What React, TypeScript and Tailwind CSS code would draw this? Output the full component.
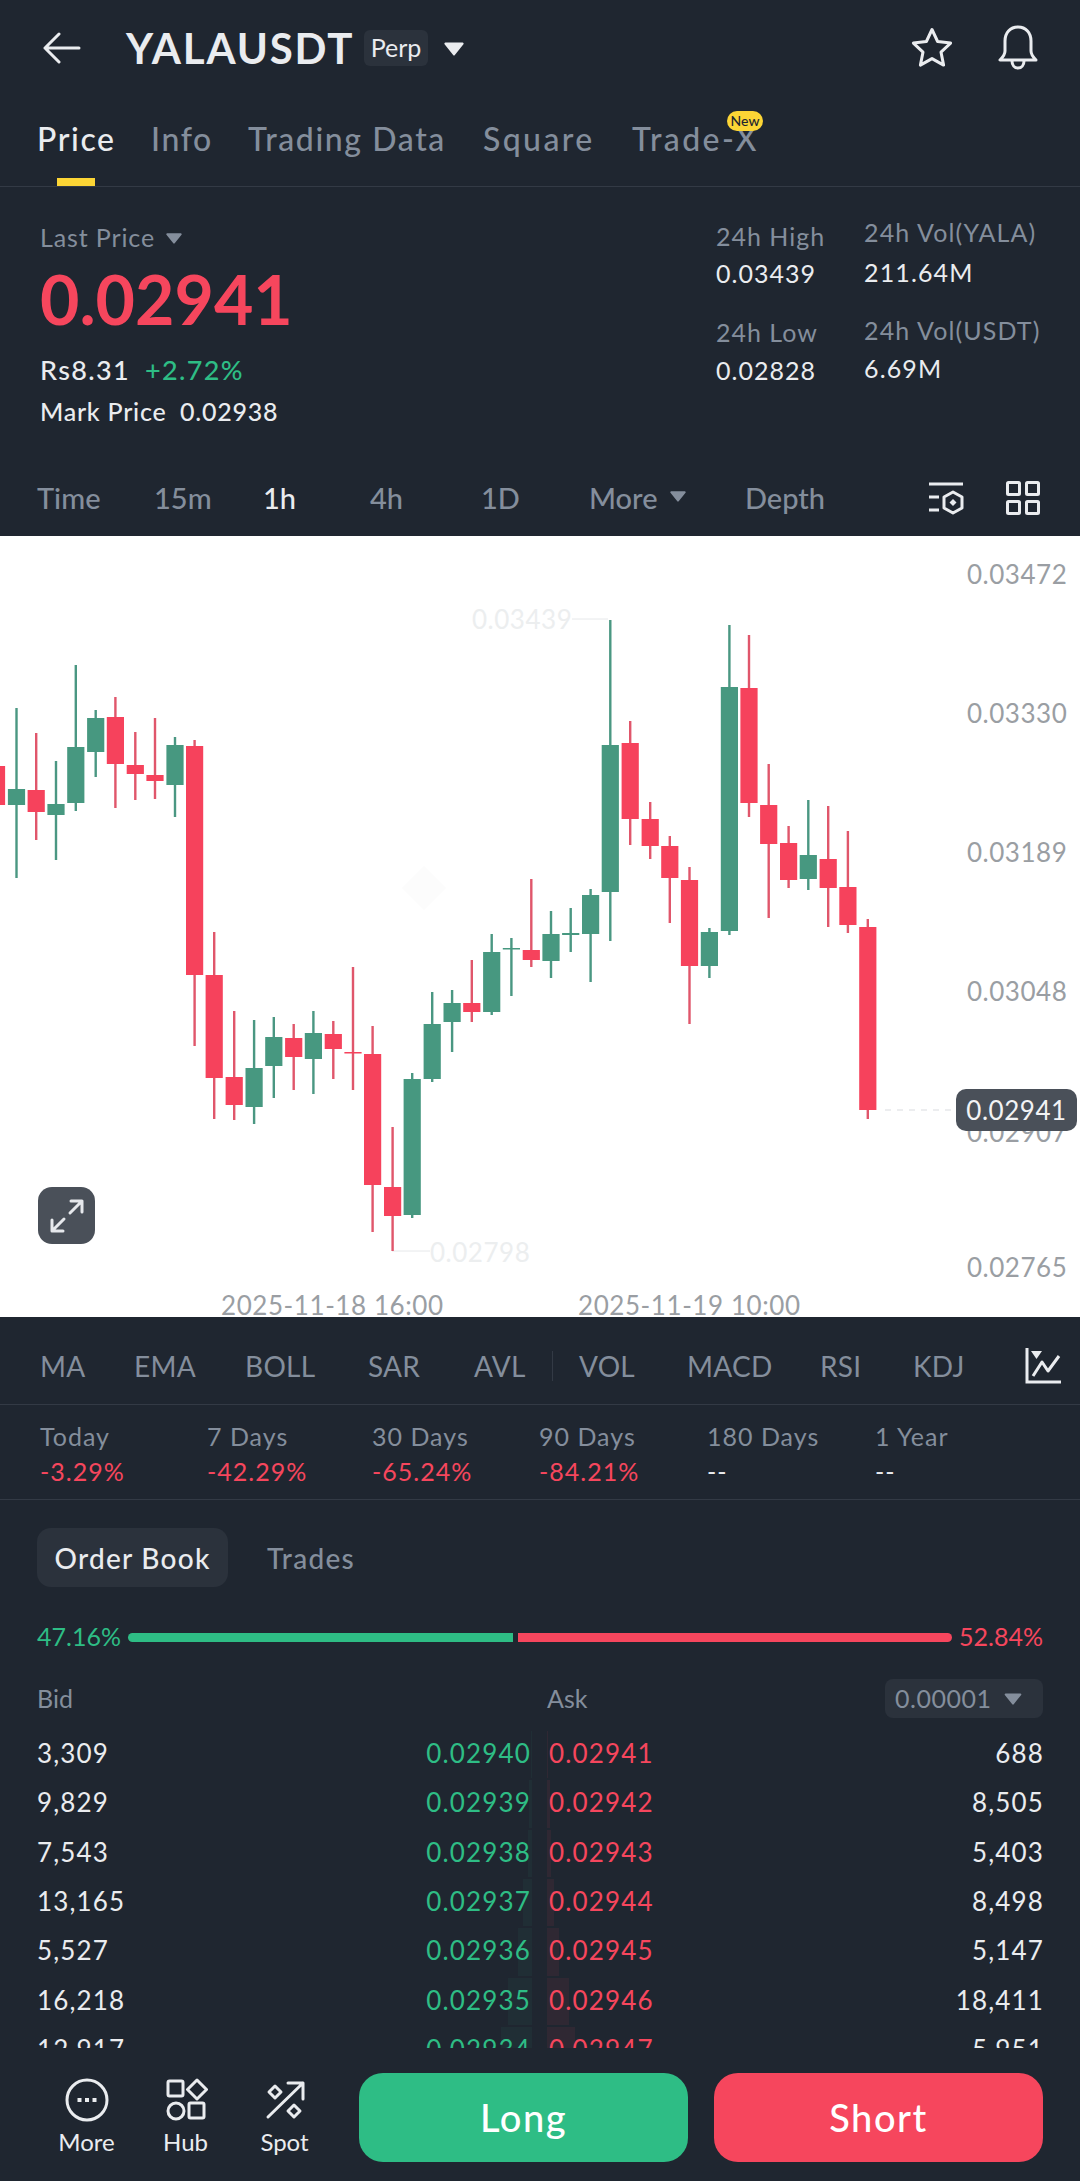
import React from "react";

type C = [number, "g" | "r", number, number, number, number];
// x, colour, wickTop, wickBottom, bodyTop, bodyBottom (page coordinates, the chart starts at y=536)
const candles: C[] = [
  [-3.5, "r", 766, 830, 766, 805],
  [16.5, "g", 708, 878, 789, 805],
  [36.2, "r", 733, 840, 790, 812],
  [56, "g", 761, 860, 804, 815],
  [75.8, "g", 665, 811, 747, 803],
  [95.7, "g", 710, 777, 718, 752],
  [115.4, "r", 697, 808, 717, 764],
  [135.3, "r", 732, 800, 765, 774],
  [155, "r", 718, 799, 775, 781],
  [175, "g", 737, 817, 745, 785],
  [194.6, "r", 740, 1046, 746, 975],
  [214.2, "r", 932, 1119, 975, 1078],
  [234.2, "r", 1011, 1120, 1077, 1105],
  [254.1, "g", 1020, 1124, 1068, 1107],
  [273.8, "g", 1017, 1098, 1037, 1066],
  [293.7, "r", 1024, 1090, 1038, 1057],
  [313.4, "g", 1011, 1094, 1033, 1059],
  [333.3, "r", 1021, 1079, 1034, 1049],
  [353, "r", 967, 1090, 1052, 1053.5],
  [372.6, "r", 1026, 1232, 1054, 1185],
  [392.6, "r", 1127, 1251, 1187, 1216],
  [412.2, "g", 1073, 1218, 1079, 1215],
  [432.2, "g", 992, 1082, 1024, 1079],
  [452.1, "g", 990, 1052, 1003, 1022],
  [471.8, "r", 960, 1022, 1003, 1012],
  [491.7, "g", 934, 1015, 952, 1012],
  [511.4, "g", 938, 996, 948, 949.5],
  [531.3, "r", 879, 967, 950, 960],
  [551, "g", 911, 978, 934, 961],
  [570.7, "g", 908, 952, 933, 935],
  [590.6, "g", 889, 982, 895, 934],
  [610.3, "g", 620, 941, 745, 892],
  [630.2, "r", 721, 845, 743, 819],
  [650.2, "r", 802, 859, 819, 846],
  [669.8, "r", 836, 923, 846, 878],
  [689.5, "r", 867, 1024, 880, 966],
  [709.4, "g", 928, 978, 932, 966],
  [729.4, "g", 625, 935, 687, 931],
  [749, "r", 635, 817, 688, 803],
  [768.7, "r", 764, 918, 805, 844],
  [788.6, "r", 826, 888, 843, 880],
  [808.3, "g", 800, 890, 855, 879],
  [828.2, "r", 806, 927, 859, 888],
  [847.9, "r", 831, 933, 887, 925],
  [867.8, "r", 919, 1119, 927, 1110],
];

const rows = [
  ["3,309", "0.02940", "0.02941", "688", 1, 1],
  ["9,829", "0.02939", "0.02942", "8,505", 3, 3],
  ["7,543", "0.02938", "0.02943", "5,403", 4, 4],
  ["13,165", "0.02937", "0.02944", "8,498", 9, 7],
  ["5,527", "0.02936", "0.02945", "5,147", 14, 12],
  ["16,218", "0.02935", "0.02946", "18,411", 24, 22],
  ["12,917", "0.02934", "0.02947", "5,951", 31, 28],
] as const;

const Tri = ({ cls }: { cls: string }) => (
  <svg viewBox="0 0 20 14" className={cls} fill="currentColor">
    <path d="M2 1.5h16a1 1 0 0 1 .8 1.6l-8 10a1 1 0 0 1-1.6 0l-8-10A1 1 0 0 1 2 1.5z" />
  </svg>
);

function Header() {
  return (
    <div className="h-[96px] flex items-center pl-[43px] shrink-0">
      <svg viewBox="0 0 38 32" className="w-[38px] h-[32px] text-[#eaecef]" fill="none" stroke="currentColor" strokeWidth="3" strokeLinecap="round" strokeLinejoin="round">
        <path d="M36 16H2M16 2 2 16l14 14" />
      </svg>
      <div className="ml-[45px] text-[42px] leading-[50px] font-bold text-[#eaecef] tracking-[1.8px] w-[238px] -mt-[1px] whitespace-nowrap">YALAUSDT</div>
      <div className="h-[36px] w-[64px] rounded-[6px] bg-[#2b323c] flex items-center justify-center text-[25px] text-[#eaecef]">Perp</div>
      <Tri cls="ml-[15px] w-[22px] h-[15px] text-[#eaecef]" />
      <svg viewBox="0 0 44 44" className="ml-[445px] w-[44px] h-[44px] text-[#eaecef]" fill="none" stroke="currentColor" strokeWidth="3" strokeLinejoin="round">
        <path d="M22 3.5l5.6 12 13 1.6-9.6 9 2.6 13L22 32.6 10.4 39.100l2.600-13-9.600-9 13-1.600z" />
      </svg>
      <svg viewBox="0 0 44 48" className="ml-[42px] w-[44px] h-[48px] text-[#eaecef]" fill="none" stroke="currentColor" strokeWidth="3" strokeLinejoin="round" strokeLinecap="round">
        <path d="M22 3c-8 0-13 6-13 14v10c0 3-2 6-5 9h36c-3-3-5-6-5-9V17c0-8-5-14-13-14z" />
        <path d="M16 37c0 4 2.500 7 6 7s6-3 6-7" />
      </svg>
    </div>
  );
}

function Tabs() {
  const t: [string, string, string][] = [
    ["Info", "w-[97px]", ""],
    ["Trading Data", "w-[235px]", ""],
    ["Square", "w-[149px]", "tracking-[0.075em]"],
    ["Trade-X", "w-[130px]", "tracking-[0.075em]"],
  ];
  return (
    <div className="h-[91px] flex pl-[38px] border-b border-[#333a45] shrink-0 text-[32px] tracking-[0.05em] font-medium text-[#848e9c] whitespace-nowrap">
      <div className="w-[113px] flex flex-col">
        <div className="h-[82px] pt-[24px] leading-[38px] text-[#eaecef] -ml-[1px]">Price</div>
        <div className="ml-[19px] w-[38px] h-[8px] bg-[#fcd535]" />
      </div>
      {t.map(([n, w, s]) => (
        <div key={n} className={`${w} ${s} pt-[24px] leading-[38px] relative`}>
          {n}
          {n === "Trade-X" && (
            <span className="absolute left-[95px] top-[15px] w-[36px] h-[20px] rounded-[10px] bg-[#fcd535] text-[#1f2630] text-[14px] leading-[20px] text-center tracking-normal">New</span>
          )}
        </div>
      ))}
    </div>
  );
}

function Stats() {
  return (
    <div className="h-[283px] flex shrink-0 relative">
      <div className="w-[716px] pl-[40px] pt-[37px]">
        <div className="flex items-center h-[28px] text-[25px] tracking-[0.035em] text-[#848e9c]">
          Last Price
          <Tri cls="ml-[10px] w-[18px] h-[12px]" />
        </div>
        <div className="mt-[15px] h-[64px] leading-[64px] text-[68px] font-bold text-[#f6465d]">0.02941</div>
        <div className="mt-[24px] h-[30px] leading-[30px] text-[27px] tracking-[0.05em] font-medium text-[#eaecef] flex">
          <span className="w-[105px]">Rs8.31</span>
          <span className="text-[#2ebd85]">+2.72%</span>
        </div>
        <div className="mt-[11px] h-[30px] leading-[30px] text-[25px] tracking-[0.03em] font-medium text-[#eaecef] flex">
          <span className="w-[140px]">Mark Price</span>
          <span>0.02938</span>
        </div>
      </div>
      <div className="w-[148px] pt-[35px] text-[25px] leading-[28px] tracking-[0.04em]">
        <div className="text-[#848e9c]">24h High</div>
        <div className="mt-[9px] text-[#eaecef]">0.03439</div>
        <div className="mt-[31px] text-[#848e9c]">24h Low</div>
        <div className="mt-[10px] text-[#eaecef]">0.02828</div>
      </div>
      <div className="pt-[31px] text-[25px] leading-[28px] whitespace-nowrap tracking-[0.045em]">
        <div className="text-[#848e9c]">24h Vol(YALA)</div>
        <div className="mt-[12px] text-[#eaecef]">211.64M</div>
        <div className="mt-[30px] text-[#848e9c]">24h Vol(USDT)</div>
        <div className="mt-[10px] text-[#eaecef]">6.69M</div>
      </div>
    </div>
  );
}

function TimeRow() {
  const c: [string, string, boolean][] = [
    ["Time", "w-[117px]", false],
    ["15m", "w-[109px]", false],
    ["1h", "w-[107px]", true],
    ["4h", "w-[111px]", false],
    ["1D", "w-[108px]", false],
  ];
  return (
    <div className="h-[66px] flex items-center pl-[37px] pb-[10px] shrink-0 text-[29px] text-[#848e9c] font-medium">
      {c.map(([n, w, a]) => (
        <div key={n} className={`${w} ${a ? "text-[#eaecef]" : ""}`}>{n}</div>
      ))}
      <div className="w-[156px] flex items-center">
        More
        <Tri cls="ml-[11px] w-[18px] h-[12px] -mt-[4px]" />
      </div>
      <div className="w-[183px]">Depth</div>
      <svg viewBox="0 0 36 34" className="w-[36px] h-[34px] text-[#eaecef]" fill="none" stroke="currentColor" strokeWidth="3">
        <path d="M1 3h34M1 16h10M1 29h10" />
        <path d="M25 11l9 5v11l-9 5-9-5V16z" strokeLinejoin="round" />
        <path d="M25 18l3.500 3.500L25 25l-3.500-3.500z" fill="currentColor" stroke="none" />
      </svg>
      <svg viewBox="0 0 34 34" className="ml-[42px] w-[34px] h-[34px] text-[#eaecef]" fill="none" stroke="currentColor" strokeWidth="3">
        <rect x="1.500" y="1.500" width="12" height="12" rx="1" />
        <rect x="20.500" y="1.500" width="12" height="12" rx="1" />
        <rect x="1.500" y="20.500" width="12" height="12" rx="1" />
        <rect x="20.500" y="20.500" width="12" height="12" rx="1" />
      </svg>
    </div>
  );
}

function Chart() {
  const axis: [string, string][] = [
    ["0.03472", "top-[25px]"],
    ["0.03330", "top-[164px]"],
    ["0.03189", "top-[303px]"],
    ["0.03048", "top-[442px]"],
    ["0.02907", "top-[583px]"],
    ["0.02765", "top-[718px]"],
  ];
  return (
    <div className="h-[781px] relative overflow-hidden bg-white shrink-0 text-[26px] leading-[26px] tracking-[0.02em]">
      <svg viewBox="0 0 1080 781" className="absolute inset-0 w-[1080px] h-[781px]">
        <g transform="translate(0,-536)">
          <path d="M424 866l22 22-22 22-22-22z" fill="#fcfcfc" />
          <path d="M572 619h36M392 1251h38" stroke="#e6e8ea" strokeWidth="1" />
          <path d="M885 1110h70" stroke="#e6e8ea" strokeWidth="1.500" strokeDasharray="6 6" />
          {candles.map(([x, k, wt, wb, bt, bb]) => {
            const col = k === "g" ? "#479880" : "#f6425c";
            const wick = k === "g" ? "#4a9782" : "#e0566b";
            return (
              <g key={x}>
                <rect x={x - 1.2} y={wt} width="2.400" height={wb - wt} fill={wick} />
                <rect x={x - 8.6} y={bt} width="17.200" height={bb - bt} fill={col} />
              </g>
            );
          })}
        </g>
      </svg>
      {axis.map(([v, t]) => (
        <span key={v} className={`absolute left-[967px] ${t} text-[#9a9ea3]`}>{v}</span>
      ))}
      <span className="absolute left-[472px] top-[70px] text-[#eceeef]">0.03439</span>
      <span className="absolute left-[430px] top-[703px] text-[#eceeef]">0.02798</span>
      <span className="absolute left-[221px] top-[756px] text-[#9a9ea3] tracking-[0.022em]">2025-11-18 16:00</span>
      <span className="absolute left-[578px] top-[756px] text-[#9a9ea3] tracking-[0.022em]">2025-11-19 10:00</span>
      <div className="absolute left-[956px] top-[553px] w-[121px] h-[42px] rounded-[10px] bg-[#4a5059] text-[#f2f3f5] flex items-center justify-center">0.02941</div>
      <div className="absolute left-[38px] top-[651px] w-[57px] h-[57px] rounded-[14px] bg-[#4a5059] flex items-center justify-center">
        <svg viewBox="0 0 36 36" className="w-[36px] h-[36px] text-[#e6e8ec]" fill="none" stroke="currentColor" strokeWidth="3" strokeLinecap="round" strokeLinejoin="round">
          <path d="M21 15 33 3M22 3h11v11M15 21 3 33M3 22v11h11" />
        </svg>
      </div>
    </div>
  );
}

function Indicators() {
  const c: [string, string][] = [
    ["MA", "w-[94px]"], ["EMA", "w-[111px]"], ["BOLL", "w-[123px]"], ["SAR", "w-[106px]"], ["AVL", "w-[78px]"],
  ];
  const d: [string, string][] = [["VOL", "w-[108px]"], ["MACD", "w-[133px]"], ["RSI", "w-[93px]"], ["KDJ", "w-[112px]"]];
  return (
    <div className="h-[88px] flex items-center pl-[40px] pt-[10px] border-b border-[#333a45] shrink-0 text-[28px] tracking-[0.01em] text-[#848e9c]">
      {c.map(([n, w]) => <div key={n} className={w}>{n}</div>)}
      <div className="w-[1px] h-[30px] bg-[#333a45] mr-[26px]" />
      {d.map(([n, w]) => <div key={n} className={w}>{n}</div>)}
      <svg viewBox="0 0 36 36" className="w-[36px] h-[36px] text-[#eaecef]" fill="none" stroke="currentColor" strokeWidth="3">
        <path d="M2 0v34h34" />
        <path d="M8 28 17 14l6 9 11-15" strokeLinejoin="round" />
        <path d="M6 3h11l-5.500 8z" fill="currentColor" stroke="none" />
      </svg>
    </div>
  );
}

function Periods() {
  const p: [string, string, boolean, string][] = [
    ["Today", "-3.29%", true, "w-[167px]"], ["7 Days", "-42.29%", true, "w-[165px]"], ["30 Days", "-65.24%", true, "w-[167px]"],
    ["90 Days", "-84.21%", true, "w-[168px]"], ["180 Days", "--", false, "w-[168px]"], ["1 Year", "--", false, "w-[167px]"],
  ];
  return (
    <div className="h-[95px] flex pl-[40px] pt-[17px] border-b border-[#333a45] shrink-0 text-[25px] leading-[28px] tracking-[0.04em]">
      {p.map(([a, b, r, w]) => (
        <div key={a} className={w}>
          <div className="text-[#848e9c]">{a}</div>
          <div className={`mt-[7px] ${r ? "text-[#f6465d]" : "text-[#eaecef]"}`}>{b}</div>
        </div>
      ))}
    </div>
  );
}

function OrderBook() {
  return (
    <div className="h-[548px] overflow-hidden shrink-0 pt-[28px] px-[37px]">
      <div className="flex items-center h-[59px] text-[28px] font-medium tracking-[0.045em]">
        <div className="w-[191px] h-[59px] rounded-[14px] bg-[#2b323c] text-[#eaecef] flex items-center justify-center">Order Book</div>
        <div className="ml-[39px] text-[#848e9c]">Trades</div>
      </div>
      <div className="mt-[30px] h-[40px] flex items-center text-[25px] whitespace-nowrap">
        <span className="w-[91px] text-[#2ebd85]">47.16%</span>
        <div className="w-[387px] h-[9px] rounded-l-full bg-[#2ebd85]" />
        <div className="ml-[5px] w-[435px] h-[9px] rounded-r-full bg-[#f6465d]" />
        <span className="ml-[7px] text-[#f6465d]">52.84%</span>
      </div>
      <div className="mt-[22px] h-[39px] flex items-center text-[25px] text-[#848e9c]">
        <span className="w-[510px]">Bid</span>
        <span className="w-[338px]">Ask</span>
        <div className="w-[158px] h-[39px] rounded-[8px] bg-[#2b323c] flex items-center pl-[10px] tracking-[0.02em]">
          0.00001
          <Tri cls="ml-[12px] w-[20px] h-[13px]" />
        </div>
      </div>
      <div className="mt-[11px]">
        {rows.map(([q1, p1, p2, q2, w1, w2]) => (
          <div key={p1} className="relative h-[49.330px] flex items-center text-[26px] tracking-[0.045em]">
            <span className="absolute top-[2px] bottom-0 left-[494px] flex justify-end w-[1px]">
              <span className="h-full shrink-0 bg-[#2ebd85]/6" style={{ width: w1 }} />
            </span>
            <span className="absolute top-[2px] bottom-0 left-[510px] bg-[#f6465d]/8" style={{ width: w2 }} />
            <span className="w-[300px] text-[#eaecef]">{q1}</span>
            <span className="relative w-[194px] text-right text-[#2ebd85]">{p1}</span>
            <span className="relative ml-[18px] text-[#f6465d]">{p2}</span>
            <span className="flex-1 text-right text-[#eaecef] -mr-[1px]">{q2}</span>
          </div>
        ))}
      </div>
    </div>
  );
}

function Bottom() {
  const sw = { fill: "none", stroke: "currentColor", strokeWidth: 3 };
  return (
    <div className="h-[133px] flex pl-[37px] shrink-0">
      <div className="w-[99px] pt-[30px] flex flex-col items-center">
        <svg viewBox="0 0 44 44" className="w-[44px] h-[44px] text-[#eaecef]" {...sw}>
          <circle cx="22" cy="22" r="20" />
          <path d="M12.500 20h4v4h-4zM20 20h4v4h-4zM27.500 20h4v4h-4z" fill="currentColor" stroke="none" />
        </svg>
        <div className="mt-[6px] text-[24px] leading-[28px] text-[#eaecef]">More</div>
      </div>
      <div className="w-[99px] pt-[30px] flex flex-col items-center">
        <svg viewBox="0 0 44 44" className="w-[44px] h-[44px] text-[#eaecef]" {...sw}>
          <rect x="4" y="3" width="15" height="15" rx="1.500" />
          <path d="M33 2l9.500 9.500L33 21l-9.500-9.500z" strokeLinejoin="round" />
          <circle cx="12" cy="33" r="8" />
          <rect x="25" y="25" width="15" height="15" rx="1.500" />
        </svg>
        <div className="mt-[6px] text-[24px] leading-[28px] text-[#eaecef]">Hub</div>
      </div>
      <div className="w-[99px] pt-[30px] flex flex-col items-center">
        <svg viewBox="0 0 44 44" className="w-[44px] h-[44px] text-[#eaecef]" {...sw}>
          <path d="M5 39 40 5M25 5h15v16" strokeLinecap="round" strokeLinejoin="round" />
          <path d="M12 8l6 6-6 6-6-6zM31 27l6 6-6 6-6-6z" strokeLinejoin="round" />
        </svg>
        <div className="mt-[6px] text-[24px] leading-[28px] text-[#eaecef]">Spot</div>
      </div>
      <button className="ml-[25px] mt-[25px] w-[329px] h-[89px] rounded-[24px] bg-[#2ebd85] text-white text-[38px] font-medium tracking-[0.04em]">Long</button>
      <button className="ml-[26px] mt-[25px] w-[329px] h-[89px] rounded-[24px] bg-[#f6465d] text-white text-[38px] font-medium tracking-[0.04em]">Short</button>
    </div>
  );
}

export default function App() {
  return (
    <div className="w-[1080px] h-[2181px] overflow-hidden bg-[#1f2630] flex flex-col [font-family:Lato,sans-serif]">
      <Header />
      <Tabs />
      <Stats />
      <TimeRow />
      <Chart />
      <Indicators />
      <Periods />
      <OrderBook />
      <Bottom />
    </div>
  );
}
